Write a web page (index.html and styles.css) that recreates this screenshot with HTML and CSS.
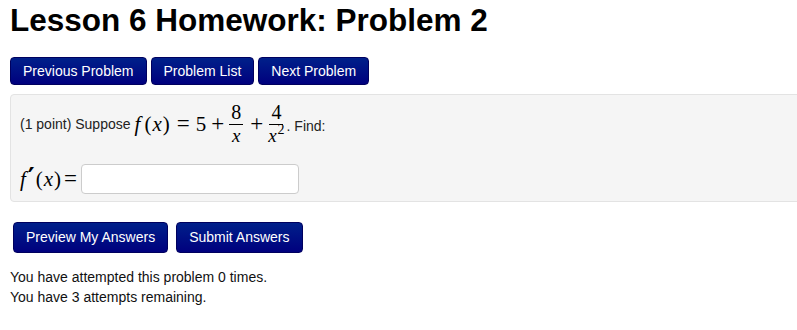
FILE: index.html
```html
<!DOCTYPE html>
<html>

<head>
	<title>Lesson 6 Homework: Problem 2</title>
	<link rel="stylesheet" href="styles.css">
</head>

<body>
	<h2 class="problem-title">Lesson 6 Homework: Problem 2</h2>

	<div class="nav-buttons">
		<a class="btn" href="#">Previous Problem</a>
		<a class="btn" href="#">Problem List</a>
		<a class="btn" href="#">Next Problem</a>
	</div>

	<div class="problem-box">
		<div class="problem-text">
			<span>(1 point) Suppose</span>
			<span class="math">
				<i class="fn">f</i><span class="paren">(</span><i>x</i><span class="paren">)</span><span class="rel">=</span>5<span class="op">+</span><span class="frac"><span class="num">8</span><span class="den"><i>x</i></span></span><span class="op">+</span><span class="frac"><span class="num">4</span><span class="den"><i>x</i><sup>2</sup></span></span></span><span class="after">. Find:</span>
		</div>

		<div class="answer-row">
			<span class="math">
				<i class="fn fn-prime">f</i><span class="prime">&prime;</span><span class="paren">(</span><i>x</i><span class="paren">)</span><span class="rel">=</span>
			</span>
			<input type="text" class="answer-input">
		</div>
	</div>

	<div class="submit-buttons">
		<button class="btn btn-big">Preview My Answers</button>
		<button class="btn btn-big">Submit Answers</button>
	</div>

	<div class="attempts">
		<div>You have attempted this problem 0 times.</div>
		<div>You have 3 attempts remaining.</div>
	</div>
</body>

</html>
```

FILE: styles.css
```css
body {
	margin: 0;
	padding: 0 10px;
	font-family: "Liberation Sans", Arial, sans-serif;
	font-size: 14px;
	color: #222;
	background-color: #fff;
	overflow: hidden;
}

.problem-title {
	margin: 0;
	padding-top: 2px;
	font-size: 31.5px;
	font-weight: bold;
	color: #000;
	line-height: 37px;
}

.nav-buttons {
	display: flex;
	gap: 4px;
	margin-top: 18px;
}

.btn {
	display: inline-block;
	height: 28px;
	padding: 0 12px;
	line-height: 26px;
	font-family: "Liberation Sans", Arial, sans-serif;
	font-size: 14px;
	color: #fff;
	text-decoration: none;
	background: linear-gradient(#00208a, #00007e);
	border: 1px solid #00005e;
	border-radius: 4px;
	box-sizing: border-box;
	cursor: pointer;
}

.problem-box {
	margin-top: 9px;
	margin-right: -30px;
	height: 108px;
	padding: 7px 9px;
	background-color: #f5f5f5;
	border: 1px solid #e3e3e3;
	border-radius: 4px;
	box-sizing: border-box;
}

.problem-text {
	display: flex;
	align-items: center;
	height: 44px;
	color: #222;
}

.math {
	display: inline-flex;
	align-items: center;
	margin-left: 4px;
	font-family: "Liberation Serif", "DejaVu Serif", serif;
	font-size: 21px;
	color: #000;
}

.math i {
	font-style: italic;
}

.fn {
	padding-right: 3px;
}

.fn-prime {
	padding-right: 2px;
}

.paren {
	font-size: 21px;
	padding: 0 1px;
}

.rel {
	padding: 0 6px;
	font-size: 23px;
}

.op {
	padding: 0 5px;
	font-size: 23px;
}

.after {
	margin-top: 3px;
}

.prime {
	font-family: "DejaVu Serif", serif;
	font-size: 26px;
	font-weight: bold;
	line-height: 20px;
	margin-top: -4px;
}

.frac {
	display: inline-flex;
	flex-direction: column;
	align-items: center;
	font-size: 19px;
	line-height: 20px;
	padding-right: 2px;
}

.num {
	border-bottom: 1px solid #000;
	padding: 0 2px 2px;
	font-size: 20px;
}

.den {
	padding-top: 1px;
}

.den sup {
	font-size: 14px;
	line-height: 0;
	vertical-align: 8px;
	padding-left: 1px;
}

.answer-row {
	display: flex;
	align-items: center;
	margin-top: 18px;
}

.answer-row .math {
	margin-left: 0;
	margin-right: 3px;
}

.answer-row .rel {
	padding: 0 1px 0 2px;
}

.answer-input {
	width: 218px;
	height: 30px;
	box-sizing: border-box;
	background-color: #fff;
	border: 1px solid #ccc;
	border-radius: 4px;
}

.submit-buttons {
	display: flex;
	gap: 8px;
	margin-top: 20px;
	margin-left: 3px;
}

.btn-big {
	height: 31px;
	line-height: 29px;
	padding: 0 12px;
}

.attempts {
	margin-top: 14px;
	line-height: 20px;
	font-size: 14px;
	color: #111;
}
```
